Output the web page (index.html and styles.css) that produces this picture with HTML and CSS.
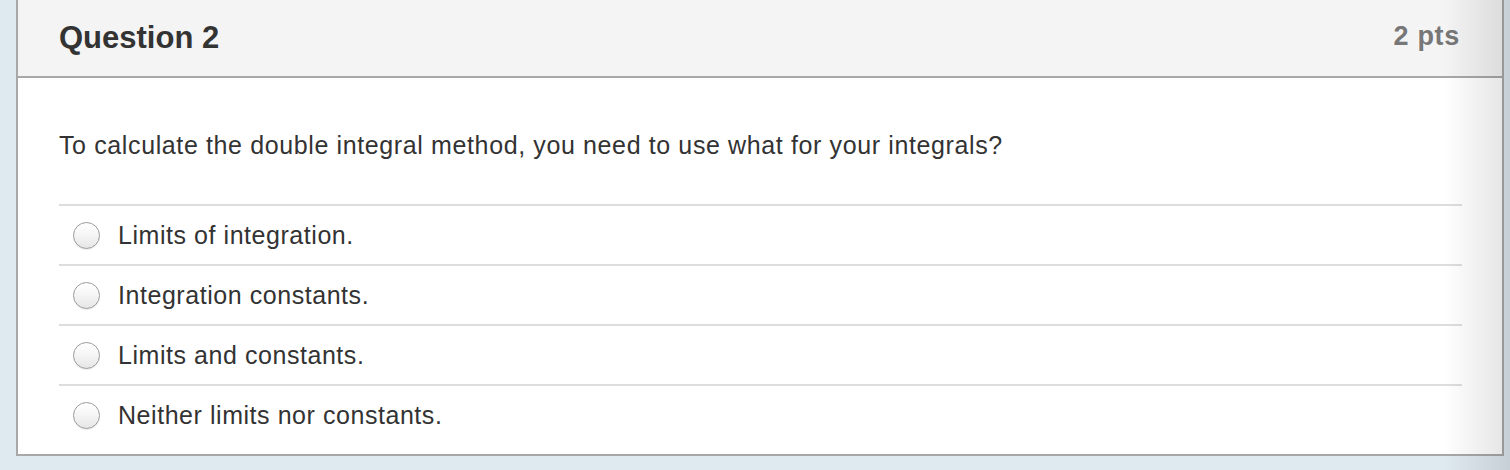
FILE: index.html
```html
<!DOCTYPE html>
<html>
<head>
<meta charset="utf-8">
<link rel="stylesheet" href="styles.css">
</head>
<body>
<div class="page">
  <div class="card">
    <div class="header">
      <h2 class="title">Question 2</h2>
      <span class="pts">2 pts</span>
    </div>
    <div class="body">
      <p class="question">To calculate the double integral method, you need to use what for your integrals?</p>
      <ul class="answers">
        <li class="answer"><span class="radio"></span><span class="label">Limits of integration.</span></li>
        <li class="answer"><span class="radio"></span><span class="label">Integration constants.</span></li>
        <li class="answer"><span class="radio"></span><span class="label">Limits and constants.</span></li>
        <li class="answer"><span class="radio"></span><span class="label">Neither limits nor constants.</span></li>
      </ul>
    </div>
  </div>
  <div class="edge-shade"></div>
</div>
</body>
</html>
```

FILE: styles.css
```css
html, body {
  margin: 0;
  padding: 0;
}
body {
  background: #dfe9f0;
  font-family: "Liberation Sans", Arial, sans-serif;
  color: #333;
  width: 1510px;
  height: 470px;
  overflow: hidden;
}
.page {
  position: relative;
  height: 470px;
}
.card {
  margin-left: 16px;
  width: 1484px;
  background: #fff;
  border: 2px solid #a8a8a8;
  border-top: none;
}
.header {
  height: 76px;
  background: #f4f4f4;
  border-bottom: 2px solid #a8a8a8;
  display: flex;
  justify-content: space-between;
  align-items: flex-start;
  padding: 0 42px 0 41px;
}
.title {
  margin: 0;
  font-size: 31px;
  line-height: 76px;
  font-weight: bold;
  color: #333;
}
.pts {
  font-size: 27px;
  letter-spacing: 0.7px;
  line-height: 72px;
  font-weight: bold;
  color: #777;
}
.body {
  padding: 51px 40px 10px 41px;
}
.question {
  margin: 0 0 43px;
  font-size: 25px;
  letter-spacing: 0.62px;
  line-height: 32px;
}
.answers {
  list-style: none;
  margin: 0;
  padding: 0;
}
.answer {
  display: flex;
  align-items: center;
  height: 58px;
  border-top: 2px solid #dddddd;
  font-size: 25px;
  letter-spacing: 0.55px;
}
.radio {
  width: 25px;
  height: 25px;
  border-radius: 50%;
  border: 1px solid #9a9a9a;
  background: linear-gradient(#ffffff, #f6f6f6 45%, #e6e6e6);
  box-shadow: inset 0 1px 1px rgba(255,255,255,0.9), 0 1px 1px rgba(0,0,0,0.08);
  margin-left: 14px;
  margin-right: 18px;
  flex: none;
}
.edge-shade {
  position: absolute;
  top: 0;
  right: 0;
  width: 66px;
  height: 470px;
  background: linear-gradient(to right, rgba(0,0,0,0), rgba(0,0,0,0.11));
  pointer-events: none;
}
```
